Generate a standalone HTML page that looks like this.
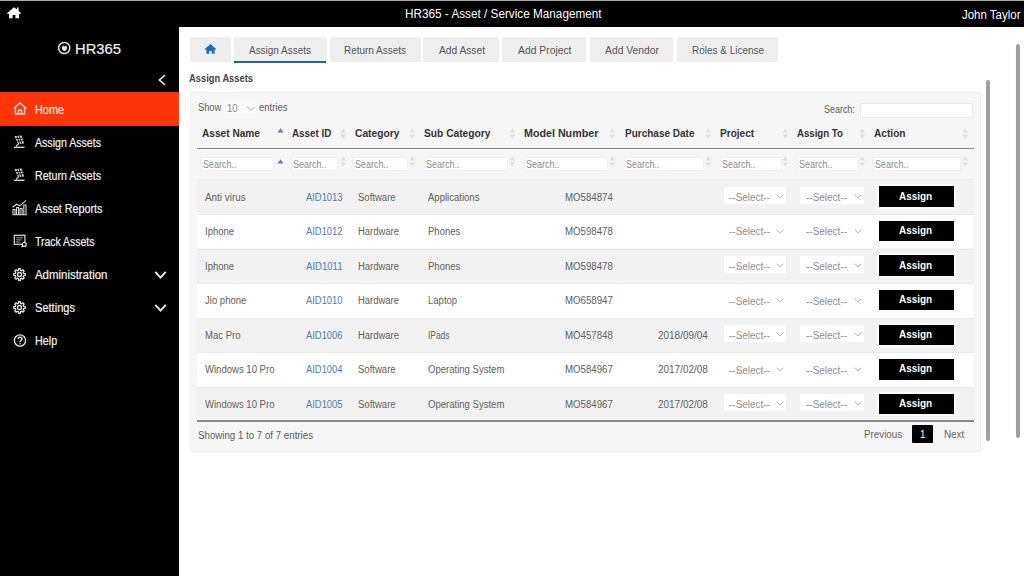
<!DOCTYPE html>
<html><head><meta charset="utf-8">
<style>
*{box-sizing:border-box;margin:0;padding:0}
html,body{width:1024px;height:576px;overflow:hidden;background:#fff;font-family:"Liberation Sans",sans-serif}
.a{position:absolute}
.t{position:absolute;white-space:nowrap;line-height:1;transform-origin:0 0}
.tab{position:absolute;top:37px;height:25px;background:#eeeeee}
.inp{position:absolute;top:156.5px;height:14.5px;background:#fff;border:1px solid #efefef;border-radius:1px}
.sel{position:absolute;height:17.2px;background:#fff}
.btn{position:absolute;height:24.5px;width:79.2px;background:#000;border:2px solid #fcfcfc;border-radius:2px}
.row{position:absolute;left:197px;width:776.5px;height:34.5px}
.sb{position:absolute;width:4px;background:#9ba1a8;border-radius:2px}
</style></head><body>
<div class="a" style="left:0;top:0;width:1024px;height:1px;background:#a8a8a8"></div>
<div class="a" style="left:0;top:1px;width:1024px;height:26px;background:#000"></div>
<svg class="a" style="left:6px;top:6px" width="16" height="13" viewBox="0 0 16 13">
 <path d="M8 1.2 L1 7.2 L2 8.3 L3 7.4 V12.3 H6.6 V9 H9.4 V12.3 H13 V7.4 L14 8.3 L15 7.2 L12.6 5.1 V1.6 H10.9 V3.6 Z" fill="#fff"/>
</svg>
<div class="a" style="left:0;top:27px;width:179px;height:549px;background:#000"></div>
<!-- logo -->
<svg class="a" style="left:57px;top:41px" width="15" height="15" viewBox="0 0 15 15">
 <circle cx="7.2" cy="7" r="5.6" fill="none" stroke="#e6e6e6" stroke-width="1.5"/>
 <path d="M5.2 5.6 L6.4 4.6 L7.6 5.4 L9 4.4 L10.2 6.4 L9.6 9 L7.6 10.3 L5.6 9.3 L4.9 7.4 Z" fill="#e6e6e6"/>
</svg>
<svg class="a" style="left:156px;top:73px" width="12" height="14" viewBox="0 0 12 14">
 <path d="M9 2 L3.4 7 L9 12" fill="none" stroke="#f2f2f2" stroke-width="1.6"/>
</svg>
<div class="a" style="left:0;top:92px;width:178.5px;height:33.5px;background:#ff350a"></div>
<!-- home nav icon -->
<svg class="a" style="left:12px;top:101px" width="16" height="15" viewBox="0 0 16 15">
 <path d="M1.8 7.4 L8 1.8 L14.2 7.4 M3.4 6.2 V13 H12.6 V6.2 M6.4 13 V9.2 H9.6 V13" fill="none" stroke="#ffdcd0" stroke-width="1.4" stroke-linejoin="round"/>
</svg>
<!-- assign / return icons -->
<svg class="a" style="left:12px;top:134px" width="15" height="15" viewBox="0 0 15 15">
 <path d="M2.5 2.2 L9.5 1.5 L12 9.5 L6 10 Z" fill="#dcdcdc"/>
 <path d="M5 2.3 L7.6 9.8 M7.2 2 L9.8 9.6 M3.4 4.6 L10.2 4.1 M4.3 7.2 L11 6.8" stroke="#000" stroke-width="0.9"/>
 <path d="M4.3 12.5 Q4.8 10.6 6.6 10.4" fill="none" stroke="#dcdcdc" stroke-width="1.2"/>
 <path d="M2 13.3 H12.5" stroke="#e6e6e6" stroke-width="1.3"/>
</svg>
<svg class="a" style="left:12px;top:167px" width="15" height="15" viewBox="0 0 15 15">
 <path d="M2.5 2.2 L9.5 1.5 L12 9.5 L6 10 Z" fill="#dcdcdc"/>
 <path d="M5 2.3 L7.6 9.8 M7.2 2 L9.8 9.6 M3.4 4.6 L10.2 4.1 M4.3 7.2 L11 6.8" stroke="#000" stroke-width="0.9"/>
 <path d="M4.3 12.5 Q4.8 10.6 6.6 10.4" fill="none" stroke="#dcdcdc" stroke-width="1.2"/>
 <path d="M2 13.3 H12.5" stroke="#e6e6e6" stroke-width="1.3"/>
</svg>
<!-- reports icon -->
<svg class="a" style="left:11px;top:199px" width="17" height="17" viewBox="0 0 17 17">
 <path d="M1.5 15.8 H15.8 M2 15.5 V10.5 H4 V15.5 M5.5 15.5 V8.5 H7.5 V15.5 M9 15.5 V9.5 H11 V15.5 M12.8 15.5 V6 H15 V15.5 M1.5 8.2 L5.5 5.2 L9 6.8 L15 1.3" fill="none" stroke="#d8d8d8" stroke-width="1.1"/>
</svg>
<!-- track icon -->
<svg class="a" style="left:13px;top:234px" width="15" height="14" viewBox="0 0 15 14">
 <rect x="1.3" y="1.3" width="10.6" height="9" fill="none" stroke="#e0e0e0" stroke-width="1.2"/>
 <path d="M3.2 3.8 H10 M3.2 5.9 H8.5 M3.2 8 H7" stroke="#b8b8b8" stroke-width="0.9"/>
 <circle cx="11.3" cy="10.4" r="2" fill="#000" stroke="#e0e0e0" stroke-width="1.2"/>
 <path d="M9.9 11.8 L8.6 13.1" stroke="#e0e0e0" stroke-width="1.3"/>
</svg>
<!-- gear icons -->
<svg class="a" style="left:13px;top:268px" width="13" height="13" viewBox="0 0 13 13">
 <path d="M12.23 5.59 L12.23 7.41 L10.66 7.57 L10.20 8.69 L11.19 9.91 L9.91 11.19 L8.69 10.20 L7.57 10.66 L7.41 12.23 L5.59 12.23 L5.43 10.66 L4.31 10.20 L3.09 11.19 L1.81 9.91 L2.80 8.69 L2.34 7.57 L0.77 7.41 L0.77 5.59 L2.34 5.43 L2.80 4.31 L1.81 3.09 L3.09 1.81 L4.31 2.80 L5.43 2.34 L5.59 0.77 L7.41 0.77 L7.57 2.34 L8.69 2.80 L9.91 1.81 L11.19 3.09 L10.20 4.31 L10.66 5.43 Z" fill="none" stroke="#e6e6e6" stroke-width="1.3" stroke-linejoin="round"/>
 <circle cx="6.5" cy="6.5" r="2" fill="none" stroke="#e6e6e6" stroke-width="1.3"/>
</svg>
<svg class="a" style="left:13px;top:301px" width="13" height="13" viewBox="0 0 13 13">
 <path d="M12.23 5.59 L12.23 7.41 L10.66 7.57 L10.20 8.69 L11.19 9.91 L9.91 11.19 L8.69 10.20 L7.57 10.66 L7.41 12.23 L5.59 12.23 L5.43 10.66 L4.31 10.20 L3.09 11.19 L1.81 9.91 L2.80 8.69 L2.34 7.57 L0.77 7.41 L0.77 5.59 L2.34 5.43 L2.80 4.31 L1.81 3.09 L3.09 1.81 L4.31 2.80 L5.43 2.34 L5.59 0.77 L7.41 0.77 L7.57 2.34 L8.69 2.80 L9.91 1.81 L11.19 3.09 L10.20 4.31 L10.66 5.43 Z" fill="none" stroke="#e6e6e6" stroke-width="1.3" stroke-linejoin="round"/>
 <circle cx="6.5" cy="6.5" r="2" fill="none" stroke="#e6e6e6" stroke-width="1.3"/>
</svg>
<!-- help icon -->
<svg class="a" style="left:12.5px;top:334px" width="14" height="13" viewBox="0 0 14 13">
 <circle cx="7" cy="6.5" r="5.6" fill="none" stroke="#e6e6e6" stroke-width="1.4"/>
 <path d="M5 5 Q5 3.2 7 3.2 Q9 3.2 9 4.9 Q9 6 7.6 6.6 Q7 6.9 7 8" fill="none" stroke="#e6e6e6" stroke-width="1.4"/>
 <circle cx="7" cy="9.8" r="0.75" fill="#e6e6e6"/>
</svg>
<!-- chevrons down -->
<svg class="a" style="left:154px;top:270px" width="13" height="10" viewBox="0 0 13 10">
 <path d="M1.3 1.8 L6.5 7.6 L11.7 1.8" fill="none" stroke="#f0f0f0" stroke-width="1.9"/>
</svg>
<svg class="a" style="left:154px;top:303px" width="13" height="10" viewBox="0 0 13 10">
 <path d="M1.3 1.8 L6.5 7.6 L11.7 1.8" fill="none" stroke="#f0f0f0" stroke-width="1.9"/>
</svg>

<!-- tabs -->
<div class="tab" style="left:189.5px;width:41.5px"></div>
<svg class="a" style="left:204px;top:43px" width="13" height="12" viewBox="0 0 13 12">
 <path d="M6.5 1 L0.8 6 L1.6 6.9 L2.4 6.2 V10.8 H5.3 V7.9 H7.7 V10.8 H10.6 V6.2 L11.4 6.9 L12.2 6 Z" fill="#1b6db4"/>
</svg>
<div class="tab" style="left:234px;width:93px;background:#efefef"></div>
<div class="a" style="left:233.5px;top:61px;width:92.5px;height:2px;background:#22688a"></div>
<div class="tab" style="left:330px;width:90.5px"></div>
<div class="tab" style="left:422.5px;width:76.5px"></div>
<div class="tab" style="left:502px;width:84px"></div>
<div class="tab" style="left:590px;width:83px"></div>
<div class="tab" style="left:676.5px;width:101px"></div>

<!-- panel -->
<div class="a" style="left:190px;top:92px;width:791px;height:359.5px;background:#f6f6f6;border:1px solid #f0f0f0"></div>
<div class="a" style="left:224px;top:98px;width:32px;height:21px;background:#f9f9f9"></div>
<svg class="a" style="left:245.5px;top:105.5px" width="10" height="5" viewBox="0 0 10 5"><path d="M1 0.8 L5 4.2 L9 0.8" fill="none" stroke="#b0b0b0" stroke-width="1"/></svg>
<div class="a" style="left:859.5px;top:103.3px;width:113px;height:14.3px;background:#fff;border:1px solid #ebebeb"></div>

<!-- header lines -->
<div class="a" style="left:197px;top:147.5px;width:776.5px;height:1.6px;background:#858585"></div>
<div class="a" style="left:197px;top:178.6px;width:776.5px;height:1.6px;background:#858585"></div>
<div class="inp" style="left:200.5px;width:73.5px"></div>
<div class="inp" style="left:290.6px;width:47.8px"></div>
<div class="inp" style="left:353.0px;width:55.0px"></div>
<div class="inp" style="left:424.0px;width:84.4px"></div>
<div class="inp" style="left:523.5px;width:84.5px"></div>
<div class="inp" style="left:624.0px;width:80.4px"></div>
<div class="inp" style="left:719.5px;width:62.5px"></div>
<div class="inp" style="left:796.8px;width:61.9px"></div>
<div class="inp" style="left:873.2px;width:88.3px"></div>
<svg class="a" style="left:339.8px;top:127.5px" width="6.4" height="11" viewBox="0 0 6.4 11"><path d="M3.2 0.3 L6 4.6 H0.4 Z M3.2 10.7 L6 6.4 H0.4 Z" fill="#e0e0e0"/></svg>
<svg class="a" style="left:339.8px;top:155.5px" width="6.4" height="11" viewBox="0 0 6.4 11"><path d="M3.2 0.3 L6 4.6 H0.4 Z M3.2 10.7 L6 6.4 H0.4 Z" fill="#e0e0e0"/></svg>
<svg class="a" style="left:408.8px;top:127.5px" width="6.4" height="11" viewBox="0 0 6.4 11"><path d="M3.2 0.3 L6 4.6 H0.4 Z M3.2 10.7 L6 6.4 H0.4 Z" fill="#e0e0e0"/></svg>
<svg class="a" style="left:408.8px;top:155.5px" width="6.4" height="11" viewBox="0 0 6.4 11"><path d="M3.2 0.3 L6 4.6 H0.4 Z M3.2 10.7 L6 6.4 H0.4 Z" fill="#e0e0e0"/></svg>
<svg class="a" style="left:509.3px;top:127.5px" width="6.4" height="11" viewBox="0 0 6.4 11"><path d="M3.2 0.3 L6 4.6 H0.4 Z M3.2 10.7 L6 6.4 H0.4 Z" fill="#e0e0e0"/></svg>
<svg class="a" style="left:509.3px;top:155.5px" width="6.4" height="11" viewBox="0 0 6.4 11"><path d="M3.2 0.3 L6 4.6 H0.4 Z M3.2 10.7 L6 6.4 H0.4 Z" fill="#e0e0e0"/></svg>
<svg class="a" style="left:609.2px;top:127.5px" width="6.4" height="11" viewBox="0 0 6.4 11"><path d="M3.2 0.3 L6 4.6 H0.4 Z M3.2 10.7 L6 6.4 H0.4 Z" fill="#e0e0e0"/></svg>
<svg class="a" style="left:609.2px;top:155.5px" width="6.4" height="11" viewBox="0 0 6.4 11"><path d="M3.2 0.3 L6 4.6 H0.4 Z M3.2 10.7 L6 6.4 H0.4 Z" fill="#e0e0e0"/></svg>
<svg class="a" style="left:705.1px;top:127.5px" width="6.4" height="11" viewBox="0 0 6.4 11"><path d="M3.2 0.3 L6 4.6 H0.4 Z M3.2 10.7 L6 6.4 H0.4 Z" fill="#e0e0e0"/></svg>
<svg class="a" style="left:705.1px;top:155.5px" width="6.4" height="11" viewBox="0 0 6.4 11"><path d="M3.2 0.3 L6 4.6 H0.4 Z M3.2 10.7 L6 6.4 H0.4 Z" fill="#e0e0e0"/></svg>
<svg class="a" style="left:782.3px;top:127.5px" width="6.4" height="11" viewBox="0 0 6.4 11"><path d="M3.2 0.3 L6 4.6 H0.4 Z M3.2 10.7 L6 6.4 H0.4 Z" fill="#e0e0e0"/></svg>
<svg class="a" style="left:782.3px;top:155.5px" width="6.4" height="11" viewBox="0 0 6.4 11"><path d="M3.2 0.3 L6 4.6 H0.4 Z M3.2 10.7 L6 6.4 H0.4 Z" fill="#e0e0e0"/></svg>
<svg class="a" style="left:859.4px;top:127.5px" width="6.4" height="11" viewBox="0 0 6.4 11"><path d="M3.2 0.3 L6 4.6 H0.4 Z M3.2 10.7 L6 6.4 H0.4 Z" fill="#e0e0e0"/></svg>
<svg class="a" style="left:859.4px;top:155.5px" width="6.4" height="11" viewBox="0 0 6.4 11"><path d="M3.2 0.3 L6 4.6 H0.4 Z M3.2 10.7 L6 6.4 H0.4 Z" fill="#e0e0e0"/></svg>
<svg class="a" style="left:962.3px;top:127.5px" width="6.4" height="11" viewBox="0 0 6.4 11"><path d="M3.2 0.3 L6 4.6 H0.4 Z M3.2 10.7 L6 6.4 H0.4 Z" fill="#e0e0e0"/></svg>
<svg class="a" style="left:962.3px;top:155.5px" width="6.4" height="11" viewBox="0 0 6.4 11"><path d="M3.2 0.3 L6 4.6 H0.4 Z M3.2 10.7 L6 6.4 H0.4 Z" fill="#e0e0e0"/></svg>
<svg class="a" style="left:277px;top:128.3px" width="7" height="5" viewBox="0 0 7 5"><path d="M3.5 0.3 L6.6 4.5 H0.4 Z" fill="#7d74b8"/></svg>
<svg class="a" style="left:277px;top:158.8px" width="7" height="5" viewBox="0 0 7 5"><path d="M3.5 0.3 L6.6 4.5 H0.4 Z" fill="#7d74b8"/></svg>
<div class="row" style="top:179.40px;background:#f2f2f2;border-top:1px solid #ebebeb"></div>
<div class="sel" style="left:723.5px;top:186.90px;width:62.3px"></div>
<div class="sel" style="left:800px;top:186.90px;width:63.9px"></div>
<svg class="a" style="left:776.3px;top:194.00px" width="8" height="5" viewBox="0 0 8 5"><path d="M0.7 0.7 L4 4 L7.3 0.7" fill="none" stroke="#b8b8b8" stroke-width="1"/></svg>
<svg class="a" style="left:854.3px;top:194.00px" width="8" height="5" viewBox="0 0 8 5"><path d="M0.7 0.7 L4 4 L7.3 0.7" fill="none" stroke="#b8b8b8" stroke-width="1"/></svg>
<div class="btn" style="left:876.5px;top:184.30px"></div>
<div class="row" style="top:213.95px;background:#ffffff;border-top:1px solid #ebebeb"></div>
<div class="sel" style="left:723.5px;top:221.45px;width:62.3px"></div>
<div class="sel" style="left:800px;top:221.45px;width:63.9px"></div>
<svg class="a" style="left:776.3px;top:228.55px" width="8" height="5" viewBox="0 0 8 5"><path d="M0.7 0.7 L4 4 L7.3 0.7" fill="none" stroke="#b8b8b8" stroke-width="1"/></svg>
<svg class="a" style="left:854.3px;top:228.55px" width="8" height="5" viewBox="0 0 8 5"><path d="M0.7 0.7 L4 4 L7.3 0.7" fill="none" stroke="#b8b8b8" stroke-width="1"/></svg>
<div class="btn" style="left:876.5px;top:218.85px"></div>
<div class="row" style="top:248.50px;background:#f2f2f2;border-top:1px solid #ebebeb"></div>
<div class="sel" style="left:723.5px;top:256.00px;width:62.3px"></div>
<div class="sel" style="left:800px;top:256.00px;width:63.9px"></div>
<svg class="a" style="left:776.3px;top:263.10px" width="8" height="5" viewBox="0 0 8 5"><path d="M0.7 0.7 L4 4 L7.3 0.7" fill="none" stroke="#b8b8b8" stroke-width="1"/></svg>
<svg class="a" style="left:854.3px;top:263.10px" width="8" height="5" viewBox="0 0 8 5"><path d="M0.7 0.7 L4 4 L7.3 0.7" fill="none" stroke="#b8b8b8" stroke-width="1"/></svg>
<div class="btn" style="left:876.5px;top:253.40px"></div>
<div class="row" style="top:283.05px;background:#ffffff;border-top:1px solid #ebebeb"></div>
<div class="sel" style="left:723.5px;top:290.55px;width:62.3px"></div>
<div class="sel" style="left:800px;top:290.55px;width:63.9px"></div>
<svg class="a" style="left:776.3px;top:297.65px" width="8" height="5" viewBox="0 0 8 5"><path d="M0.7 0.7 L4 4 L7.3 0.7" fill="none" stroke="#b8b8b8" stroke-width="1"/></svg>
<svg class="a" style="left:854.3px;top:297.65px" width="8" height="5" viewBox="0 0 8 5"><path d="M0.7 0.7 L4 4 L7.3 0.7" fill="none" stroke="#b8b8b8" stroke-width="1"/></svg>
<div class="btn" style="left:876.5px;top:287.95px"></div>
<div class="row" style="top:317.60px;background:#f2f2f2;border-top:1px solid #ebebeb"></div>
<div class="sel" style="left:723.5px;top:325.10px;width:62.3px"></div>
<div class="sel" style="left:800px;top:325.10px;width:63.9px"></div>
<svg class="a" style="left:776.3px;top:332.20px" width="8" height="5" viewBox="0 0 8 5"><path d="M0.7 0.7 L4 4 L7.3 0.7" fill="none" stroke="#b8b8b8" stroke-width="1"/></svg>
<svg class="a" style="left:854.3px;top:332.20px" width="8" height="5" viewBox="0 0 8 5"><path d="M0.7 0.7 L4 4 L7.3 0.7" fill="none" stroke="#b8b8b8" stroke-width="1"/></svg>
<div class="btn" style="left:876.5px;top:322.50px"></div>
<div class="row" style="top:352.15px;background:#ffffff;border-top:1px solid #ebebeb"></div>
<div class="sel" style="left:723.5px;top:359.65px;width:62.3px"></div>
<div class="sel" style="left:800px;top:359.65px;width:63.9px"></div>
<svg class="a" style="left:776.3px;top:366.75px" width="8" height="5" viewBox="0 0 8 5"><path d="M0.7 0.7 L4 4 L7.3 0.7" fill="none" stroke="#b8b8b8" stroke-width="1"/></svg>
<svg class="a" style="left:854.3px;top:366.75px" width="8" height="5" viewBox="0 0 8 5"><path d="M0.7 0.7 L4 4 L7.3 0.7" fill="none" stroke="#b8b8b8" stroke-width="1"/></svg>
<div class="btn" style="left:876.5px;top:357.05px"></div>
<div class="row" style="top:386.70px;background:#f2f2f2;border-top:1px solid #ebebeb"></div>
<div class="sel" style="left:723.5px;top:394.20px;width:62.3px"></div>
<div class="sel" style="left:800px;top:394.20px;width:63.9px"></div>
<svg class="a" style="left:776.3px;top:401.30px" width="8" height="5" viewBox="0 0 8 5"><path d="M0.7 0.7 L4 4 L7.3 0.7" fill="none" stroke="#b8b8b8" stroke-width="1"/></svg>
<svg class="a" style="left:854.3px;top:401.30px" width="8" height="5" viewBox="0 0 8 5"><path d="M0.7 0.7 L4 4 L7.3 0.7" fill="none" stroke="#b8b8b8" stroke-width="1"/></svg>
<div class="btn" style="left:876.5px;top:391.60px"></div>
<div class="a" style="left:197px;top:420px;width:776.5px;height:1.6px;background:#8a8a8a"></div>
<div class="a" style="left:912.2px;top:424.6px;width:21px;height:18.4px;background:#000;border-radius:1px"></div>

<!-- scrollbars -->
<div class="sb" style="left:986px;top:80px;height:61px;height:360.7px"></div>
<div class="sb" style="left:1016.2px;top:44.3px;height:393.3px"></div>
<span class="t" style="left:405.40px;top:7.84px;font-size:12px;color:#fff;transform:scaleX(0.9793);">HR365 - Asset / Service Management</span>
<span class="t" style="left:962.00px;top:8.64px;font-size:12px;color:#fff;transform:scaleX(0.9566);">John Taylor</span>
<span class="t" style="left:74.70px;top:40.88px;font-size:15.5px;color:#eeeeee;transform:scaleX(0.9534);-webkit-text-stroke:0.2px">HR365</span>
<span class="t" style="left:34.90px;top:103.54px;font-size:12px;color:#ffe2d8;transform:scaleX(0.9058);-webkit-text-stroke:0.2px">Home</span>
<span class="t" style="left:34.90px;top:136.94px;font-size:12px;color:#f2f2f2;transform:scaleX(0.8835);-webkit-text-stroke:0.2px">Assign Assets</span>
<span class="t" style="left:34.90px;top:170.04px;font-size:12px;color:#f2f2f2;transform:scaleX(0.8835);-webkit-text-stroke:0.2px">Return Assets</span>
<span class="t" style="left:34.90px;top:202.94px;font-size:12px;color:#f2f2f2;transform:scaleX(0.8942);-webkit-text-stroke:0.2px">Asset Reports</span>
<span class="t" style="left:34.90px;top:236.14px;font-size:12px;color:#f2f2f2;transform:scaleX(0.8703);-webkit-text-stroke:0.2px">Track Assets</span>
<span class="t" style="left:34.90px;top:268.94px;font-size:12px;color:#f2f2f2;transform:scaleX(0.9522);-webkit-text-stroke:0.2px">Administration</span>
<span class="t" style="left:34.90px;top:301.84px;font-size:12px;color:#f2f2f2;transform:scaleX(0.9225);-webkit-text-stroke:0.2px">Settings</span>
<span class="t" style="left:34.90px;top:334.64px;font-size:12px;color:#f2f2f2;transform:scaleX(0.8992);-webkit-text-stroke:0.2px">Help</span>
<span class="t" style="left:249.00px;top:45.07px;font-size:11.5px;color:#555;transform:scaleX(0.8660);">Assign Assets</span>
<span class="t" style="left:343.70px;top:45.07px;font-size:11.5px;color:#555;transform:scaleX(0.8660);">Return Assets</span>
<span class="t" style="left:438.80px;top:45.07px;font-size:11.5px;color:#555;transform:scaleX(0.8881);">Add Asset</span>
<span class="t" style="left:517.50px;top:45.07px;font-size:11.5px;color:#555;transform:scaleX(0.8999);">Add Project</span>
<span class="t" style="left:604.60px;top:45.07px;font-size:11.5px;color:#555;transform:scaleX(0.8984);">Add Vendor</span>
<span class="t" style="left:691.60px;top:45.07px;font-size:11.5px;color:#555;transform:scaleX(0.8663);">Roles &amp; License</span>
<span class="t" style="left:189.00px;top:73.07px;font-size:11.5px;font-weight:bold;color:#444;transform:scaleX(0.8119);">Assign Assets</span>
<span class="t" style="left:197.50px;top:102.53px;font-size:10px;color:#5c5c5c;transform:scaleX(0.9234);">Show</span>
<span class="t" style="left:227.00px;top:103.53px;font-size:10px;color:#888;transform:scaleX(0.9528);">10</span>
<span class="t" style="left:259.30px;top:102.53px;font-size:10px;color:#5c5c5c;transform:scaleX(0.9495);">entries</span>
<span class="t" style="left:824.00px;top:104.53px;font-size:10px;color:#5c5c5c;transform:scaleX(0.8936);">Search:</span>
<span class="t" style="left:201.60px;top:129.34px;font-size:10px;font-weight:bold;color:#333;transform:scaleX(1.0128);">Asset Name</span>
<span class="t" style="left:291.60px;top:129.34px;font-size:10px;font-weight:bold;color:#333;transform:scaleX(0.9846);">Asset ID</span>
<span class="t" style="left:354.50px;top:129.34px;font-size:10px;font-weight:bold;color:#333;transform:scaleX(1.0263);">Category</span>
<span class="t" style="left:423.90px;top:129.34px;font-size:10px;font-weight:bold;color:#333;transform:scaleX(1.0213);">Sub Category</span>
<span class="t" style="left:524.10px;top:129.34px;font-size:10px;font-weight:bold;color:#333;transform:scaleX(1.0698);">Model Number</span>
<span class="t" style="left:624.50px;top:129.34px;font-size:10px;font-weight:bold;color:#333;transform:scaleX(1.0002);">Purchase Date</span>
<span class="t" style="left:720.00px;top:129.34px;font-size:10px;font-weight:bold;color:#333;transform:scaleX(1.0087);">Project</span>
<span class="t" style="left:797.20px;top:129.34px;font-size:10px;font-weight:bold;color:#333;transform:scaleX(0.9623);">Assign To</span>
<span class="t" style="left:874.30px;top:129.34px;font-size:10px;font-weight:bold;color:#333;transform:scaleX(1.0126);">Action</span>
<span class="t" style="left:202.70px;top:159.53px;font-size:10px;color:#8c8c8c;transform:scaleX(0.8993);">Search..</span>
<span class="t" style="left:292.80px;top:159.53px;font-size:10px;color:#8c8c8c;transform:scaleX(0.8993);">Search..</span>
<span class="t" style="left:355.20px;top:159.53px;font-size:10px;color:#8c8c8c;transform:scaleX(0.8993);">Search..</span>
<span class="t" style="left:426.20px;top:159.53px;font-size:10px;color:#8c8c8c;transform:scaleX(0.8993);">Search..</span>
<span class="t" style="left:525.70px;top:159.53px;font-size:10px;color:#8c8c8c;transform:scaleX(0.8993);">Search..</span>
<span class="t" style="left:626.20px;top:159.53px;font-size:10px;color:#8c8c8c;transform:scaleX(0.8993);">Search..</span>
<span class="t" style="left:721.70px;top:159.53px;font-size:10px;color:#8c8c8c;transform:scaleX(0.8993);">Search..</span>
<span class="t" style="left:799.00px;top:159.53px;font-size:10px;color:#8c8c8c;transform:scaleX(0.8993);">Search..</span>
<span class="t" style="left:875.40px;top:159.53px;font-size:10px;color:#8c8c8c;transform:scaleX(0.8993);">Search..</span>
<span class="t" style="left:204.80px;top:192.63px;font-size:10px;color:#606060;transform:scaleX(0.9872);">Anti virus</span>
<span class="t" style="left:306.00px;top:192.63px;font-size:10px;color:#4a7eb0;transform:scaleX(0.9378);">AID1013</span>
<span class="t" style="left:358.30px;top:192.63px;font-size:10px;color:#606060;transform:scaleX(0.9539);">Software</span>
<span class="t" style="left:428.00px;top:192.63px;font-size:10px;color:#606060;transform:scaleX(0.9539);">Applications</span>
<span class="t" style="left:565.40px;top:192.63px;font-size:10px;color:#606060;transform:scaleX(0.9660);">MO584874</span>
<span class="t" style="left:729.00px;top:192.94px;font-size:10px;color:#8f8f8f;transform:scaleX(0.9970);">--Select--</span>
<span class="t" style="left:805.50px;top:192.94px;font-size:10px;color:#8f8f8f;transform:scaleX(0.9970);">--Select--</span>
<span class="t" style="left:899.30px;top:190.61px;font-size:10.5px;font-weight:bold;color:#fff;transform:scaleX(0.9481);">Assign</span>
<span class="t" style="left:204.80px;top:227.18px;font-size:10px;color:#606060;transform:scaleX(0.9539);">Iphone</span>
<span class="t" style="left:306.00px;top:227.18px;font-size:10px;color:#4a7eb0;transform:scaleX(0.9378);">AID1012</span>
<span class="t" style="left:358.30px;top:227.18px;font-size:10px;color:#606060;transform:scaleX(0.9456);">Hardware</span>
<span class="t" style="left:428.00px;top:227.18px;font-size:10px;color:#606060;transform:scaleX(0.9539);">Phones</span>
<span class="t" style="left:565.40px;top:227.18px;font-size:10px;color:#606060;transform:scaleX(0.9660);">MO598478</span>
<span class="t" style="left:729.00px;top:227.48px;font-size:10px;color:#8f8f8f;transform:scaleX(0.9970);">--Select--</span>
<span class="t" style="left:805.50px;top:227.48px;font-size:10px;color:#8f8f8f;transform:scaleX(0.9970);">--Select--</span>
<span class="t" style="left:899.30px;top:225.16px;font-size:10.5px;font-weight:bold;color:#fff;transform:scaleX(0.9481);">Assign</span>
<span class="t" style="left:204.80px;top:261.74px;font-size:10px;color:#606060;transform:scaleX(0.9539);">Iphone</span>
<span class="t" style="left:306.00px;top:261.74px;font-size:10px;color:#4a7eb0;transform:scaleX(0.9558);">AID1011</span>
<span class="t" style="left:358.30px;top:261.74px;font-size:10px;color:#606060;transform:scaleX(0.9456);">Hardware</span>
<span class="t" style="left:428.00px;top:261.74px;font-size:10px;color:#606060;transform:scaleX(0.9539);">Phones</span>
<span class="t" style="left:565.40px;top:261.74px;font-size:10px;color:#606060;transform:scaleX(0.9660);">MO598478</span>
<span class="t" style="left:729.00px;top:262.04px;font-size:10px;color:#8f8f8f;transform:scaleX(0.9970);">--Select--</span>
<span class="t" style="left:805.50px;top:262.04px;font-size:10px;color:#8f8f8f;transform:scaleX(0.9970);">--Select--</span>
<span class="t" style="left:899.30px;top:259.71px;font-size:10.5px;font-weight:bold;color:#fff;transform:scaleX(0.9481);">Assign</span>
<span class="t" style="left:204.80px;top:296.29px;font-size:10px;color:#606060;transform:scaleX(0.9539);">Jio phone</span>
<span class="t" style="left:306.00px;top:296.29px;font-size:10px;color:#4a7eb0;transform:scaleX(0.9378);">AID1010</span>
<span class="t" style="left:358.30px;top:296.29px;font-size:10px;color:#606060;transform:scaleX(0.9456);">Hardware</span>
<span class="t" style="left:428.00px;top:296.29px;font-size:10px;color:#606060;transform:scaleX(0.9539);">Laptop</span>
<span class="t" style="left:565.40px;top:296.29px;font-size:10px;color:#606060;transform:scaleX(0.9660);">MO658947</span>
<span class="t" style="left:729.00px;top:296.59px;font-size:10px;color:#8f8f8f;transform:scaleX(0.9970);">--Select--</span>
<span class="t" style="left:805.50px;top:296.59px;font-size:10px;color:#8f8f8f;transform:scaleX(0.9970);">--Select--</span>
<span class="t" style="left:899.30px;top:294.26px;font-size:10.5px;font-weight:bold;color:#fff;transform:scaleX(0.9481);">Assign</span>
<span class="t" style="left:204.80px;top:330.83px;font-size:10px;color:#606060;transform:scaleX(0.9539);">Mac Pro</span>
<span class="t" style="left:306.00px;top:330.83px;font-size:10px;color:#4a7eb0;transform:scaleX(0.9378);">AID1006</span>
<span class="t" style="left:358.30px;top:330.83px;font-size:10px;color:#606060;transform:scaleX(0.9456);">Hardware</span>
<span class="t" style="left:428.00px;top:330.83px;font-size:10px;color:#606060;transform:scaleX(0.8406);">IPads</span>
<span class="t" style="left:565.40px;top:330.83px;font-size:10px;color:#606060;transform:scaleX(0.9660);">MO457848</span>
<span class="t" style="left:658.20px;top:330.83px;font-size:10px;color:#606060;transform:scaleX(0.9948);">2018/09/04</span>
<span class="t" style="left:729.00px;top:331.13px;font-size:10px;color:#8f8f8f;transform:scaleX(0.9970);">--Select--</span>
<span class="t" style="left:805.50px;top:331.13px;font-size:10px;color:#8f8f8f;transform:scaleX(0.9970);">--Select--</span>
<span class="t" style="left:899.30px;top:328.81px;font-size:10.5px;font-weight:bold;color:#fff;transform:scaleX(0.9481);">Assign</span>
<span class="t" style="left:204.80px;top:365.39px;font-size:10px;color:#606060;transform:scaleX(0.9539);">Windows 10 Pro</span>
<span class="t" style="left:306.00px;top:365.39px;font-size:10px;color:#4a7eb0;transform:scaleX(0.9378);">AID1004</span>
<span class="t" style="left:358.30px;top:365.39px;font-size:10px;color:#606060;transform:scaleX(0.9539);">Software</span>
<span class="t" style="left:428.00px;top:365.39px;font-size:10px;color:#606060;transform:scaleX(0.9539);">Operating System</span>
<span class="t" style="left:565.40px;top:365.39px;font-size:10px;color:#606060;transform:scaleX(0.9660);">MO584967</span>
<span class="t" style="left:658.20px;top:365.39px;font-size:10px;color:#606060;transform:scaleX(0.9948);">2017/02/08</span>
<span class="t" style="left:729.00px;top:365.69px;font-size:10px;color:#8f8f8f;transform:scaleX(0.9970);">--Select--</span>
<span class="t" style="left:805.50px;top:365.69px;font-size:10px;color:#8f8f8f;transform:scaleX(0.9970);">--Select--</span>
<span class="t" style="left:899.30px;top:363.36px;font-size:10.5px;font-weight:bold;color:#fff;transform:scaleX(0.9481);">Assign</span>
<span class="t" style="left:204.80px;top:399.94px;font-size:10px;color:#606060;transform:scaleX(0.9539);">Windows 10 Pro</span>
<span class="t" style="left:306.00px;top:399.94px;font-size:10px;color:#4a7eb0;transform:scaleX(0.9378);">AID1005</span>
<span class="t" style="left:358.30px;top:399.94px;font-size:10px;color:#606060;transform:scaleX(0.9539);">Software</span>
<span class="t" style="left:428.00px;top:399.94px;font-size:10px;color:#606060;transform:scaleX(0.9539);">Operating System</span>
<span class="t" style="left:565.40px;top:399.94px;font-size:10px;color:#606060;transform:scaleX(0.9660);">MO584967</span>
<span class="t" style="left:658.20px;top:399.94px;font-size:10px;color:#606060;transform:scaleX(0.9948);">2017/02/08</span>
<span class="t" style="left:729.00px;top:400.24px;font-size:10px;color:#8f8f8f;transform:scaleX(0.9970);">--Select--</span>
<span class="t" style="left:805.50px;top:400.24px;font-size:10px;color:#8f8f8f;transform:scaleX(0.9970);">--Select--</span>
<span class="t" style="left:899.30px;top:397.91px;font-size:10.5px;font-weight:bold;color:#fff;transform:scaleX(0.9481);">Assign</span>
<span class="t" style="left:197.50px;top:430.54px;font-size:10px;color:#5c5c5c;transform:scaleX(0.9711);">Showing 1 to 7 of 7 entries</span>
<span class="t" style="left:864.40px;top:428.71px;font-size:10.5px;color:#666;transform:scaleX(0.9349);">Previous</span>
<span class="t" style="left:919.50px;top:428.71px;font-size:10.5px;color:#fff;transform:scaleX(0.9352);">1</span>
<span class="t" style="left:944.00px;top:428.71px;font-size:10.5px;color:#666;transform:scaleX(0.9355);">Next</span>
</body></html>
